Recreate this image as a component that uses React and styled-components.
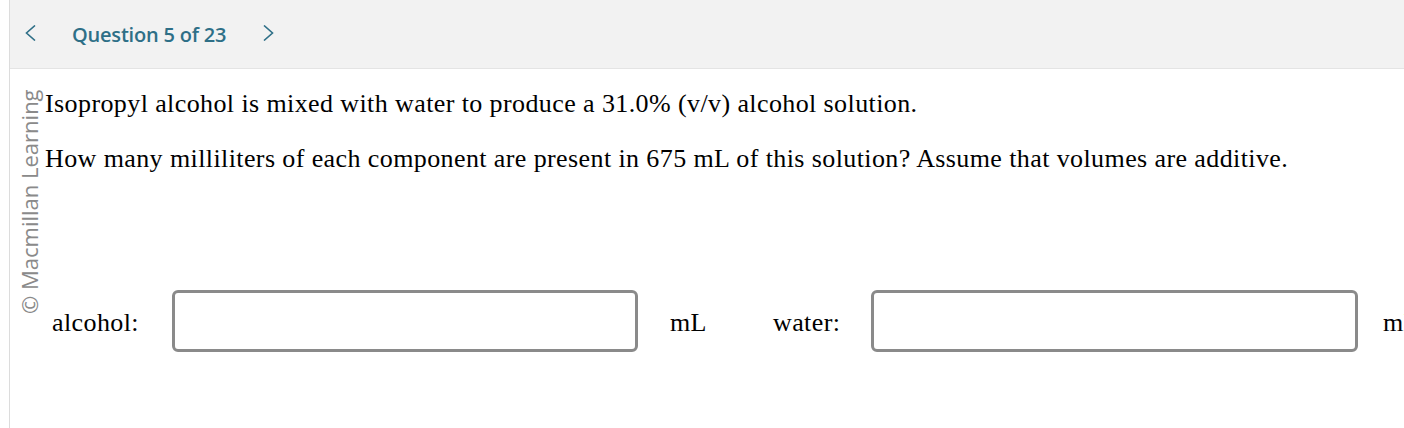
import React from "react";
import styled, { createGlobalStyle } from "styled-components";

const GlobalStyle = createGlobalStyle`
  html, body {
    margin: 0;
    padding: 0;
    background: #ffffff;
  }
  body {
    font-family: "Liberation Serif", "Times New Roman", serif;
  }
`;

const Page = styled.div`
  margin-left: 9px;
  border-left: 1px solid #dcdcdc;
  min-height: 428px;
  box-sizing: border-box;
  overflow: hidden;
`;

const Header = styled.header`
  height: 69px;
  box-sizing: border-box;
  background: #f2f2f2;
  border-bottom: 1px solid #e4e4e4;
  display: flex;
  align-items: center;
  padding-left: 15px;
`;

const NavButton = styled.button`
  border: none;
  background: none;
  padding: 0;
  width: 11px;
  height: 16px;
  display: flex;
  align-items: center;
  justify-content: center;
  cursor: pointer;
  color: #2e6f87;
  margin-top: -2px;
`;

const Title = styled.h2`
  margin: 0 37px 0 36px;
  font-family: "Open Sans", "Noto Sans", sans-serif;
  font-weight: 600;
  font-size: 20px;
  color: #2e6f87;
  letter-spacing: -0.2px;
`;

const Body = styled.main`
  position: relative;
  padding: 20px 0 0 35px;
`;

const Watermark = styled.div`
  position: absolute;
  left: 7px;
  top: 245px;
  transform-origin: 0 0;
  transform: rotate(-90deg);
  font-family: "Open Sans", "Noto Sans", sans-serif;
  font-size: 22px;
  color: #8a8a8a;
  white-space: nowrap;
  line-height: 24px;
`;

const Para = styled.p`
  margin: 0 0 ${({ $gap }) => $gap}px 0;
  font-size: 26px;
  letter-spacing: 0.4px;
  line-height: 30px;
  color: #000;
  white-space: nowrap;
`;

const AnswerRow = styled.div`
  display: flex;
  align-items: center;
  margin-top: 116px;
  padding-left: 7px;
  font-size: 26px;
  letter-spacing: 0.4px;
  line-height: 30px;
  white-space: nowrap;
`;

const Label = styled.span`
  width: ${({ $w }) => $w}px;
  flex-shrink: 0;
  padding-top: 3px;
`;

const Field = styled.input`
  width: ${({ $w }) => $w}px;
  height: 62px;
  box-sizing: border-box;
  border: 3px solid #8a8a8a;
  border-radius: 6px;
  background: #fff;
  flex-shrink: 0;
  font-size: 20px;
  padding: 0 10px;
  outline: none;
`;

const Unit = styled.span`
  width: ${({ $w }) => $w}px;
  padding-left: ${({ $pad }) => $pad}px;
  padding-top: 3px;
  box-sizing: border-box;
  flex-shrink: 0;
`;

const Chevron = ({ dir }) => (
  <svg width="11" height="16" viewBox="0 0 11 16" fill="none">
    <path
      d={dir === "left" ? "M10 0.5 L1.5 8 L10 15.5" : "M1 0.5 L9.5 8 L1 15.5"}
      stroke="currentColor"
      strokeWidth="1.6"
    />
  </svg>
);

export default function App() {
  return (
    <>
      <GlobalStyle />
      <Page>
        <Header>
          <NavButton aria-label="previous">
            <Chevron dir="left" />
          </NavButton>
          <Title>Question 5 of 23</Title>
          <NavButton aria-label="next">
            <Chevron dir="right" />
          </NavButton>
        </Header>
        <Body>
          <Watermark>© Macmillan Learning</Watermark>
          <Para $gap={25}>
            Isopropyl alcohol is mixed with water to produce a 31.0% (v/v) alcohol solution.
          </Para>
          <Para $gap={0}>
            How many milliliters of each component are present in 675 mL of this solution? Assume
            that volumes are additive.
          </Para>
          <AnswerRow>
            <Label $w={120}>alcohol:</Label>
            <Field $w={466} />
            <Unit $w={135} $pad={32}>mL</Unit>
            <Label $w={98}>water:</Label>
            <Field $w={487} />
            <Unit $w={60} $pad={25}>mL</Unit>
          </AnswerRow>
        </Body>
      </Page>
    </>
  );
}
